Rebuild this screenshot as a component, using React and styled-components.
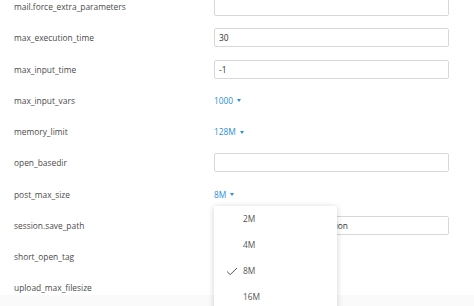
import React from 'react';
import styled, { createGlobalStyle } from 'styled-components';

const GlobalStyle = createGlobalStyle`
  html, body {
    margin: 0;
    padding: 0;
    background: #fff;
    overflow: hidden;
  }
  body {
    font-family: 'Open Sans', 'Noto Sans', sans-serif;
    color: #444;
  }
`;

const Page = styled.div`
  width: 474px;
  height: 306px;
  overflow: hidden;
  position: relative;
`;

const List = styled.div`
  margin-top: -9px;
  display: flex;
  flex-direction: column;
  position: relative;
  z-index: 1;
`;

const Row = styled.div`
  display: flex;
  align-items: center;
  height: 31.25px;
  position: relative;
`;

const Label = styled.div`
  width: 214px;
  padding-left: 14px;
  box-sizing: border-box;
  font-size: 8.4px;
  color: #4a4a4a;
  white-space: nowrap;
`;

const Input = styled.input`
  width: 235px;
  height: 19px;
  box-sizing: border-box;
  border: 1px solid #d8d8d8;
  border-radius: 2px;
  padding: 0 4px;
  font-family: inherit;
  font-size: 8.4px;
  color: #333;
  outline: none;
  background: #fff;
`;

const SelectValue = styled.div`
  position: relative;
  display: flex;
  align-items: center;
  gap: 4px;
  font-size: 8.4px;
  color: #2b8fd8;
  cursor: pointer;
`;

const Caret = styled.span`
  width: 0;
  height: 0;
  border-left: 2.5px solid transparent;
  border-right: 2.5px solid transparent;
  border-top: 3px solid #2b8fd8;
  margin-top: 1px;
`;

const Menu = styled.div`
  position: absolute;
  top: 17px;
  left: 0;
  width: 123px;
  height: 110px;
  background: #fff;
  box-shadow: 0 1px 6px rgba(0, 0, 0, 0.18);
  border-radius: 2px;
  z-index: 2;
  display: flex;
  flex-direction: column;
`;

const MenuItem = styled.div`
  position: relative;
  height: 26px;
  display: flex;
  align-items: center;
  padding-left: 29px;
  font-size: 8.4px;
  color: #555;
  flex-shrink: 0;
`;

const Check = styled.svg`
  position: absolute;
  left: 12px;
  top: 9px;
`;

const Band = styled.div`
  position: absolute;
  left: 0;
  right: 0;
  top: 295px;
  bottom: 0;
  background: #fafafa;
  z-index: 0;
`;

const rows = [
  { name: 'mail.force_extra_parameters', type: 'input', value: '' },
  { name: 'max_execution_time', type: 'input', value: '30' },
  { name: 'max_input_time', type: 'input', value: '-1' },
  { name: 'max_input_vars', type: 'select', value: '1000' },
  { name: 'memory_limit', type: 'select', value: '128M' },
  { name: 'open_basedir', type: 'input', value: '' },
  { name: 'post_max_size', type: 'select', value: '8M', open: true },
  { name: 'session.save_path', type: 'input', value: '/var/www/vhosts/system/session' },
  { name: 'short_open_tag', type: 'none' },
  { name: 'upload_max_filesize', type: 'none' },
];

const sizes = ['2M', '4M', '8M', '16M'];

function DropdownMenu({ selected }) {
  return (
    <Menu>
      {sizes.map((s) => (
        <MenuItem key={s}>
          {s === selected && (
            <Check width="12" height="9" viewBox="0 0 12 9">
              <path d="M1 4.5 L4.2 7.6 L11 1" fill="none" stroke="#555" strokeWidth="1" />
            </Check>
          )}
          {s}
        </MenuItem>
      ))}
    </Menu>
  );
}

export default function App() {
  return (
    <Page>
      <GlobalStyle />
      <Band />
      <List>
        {rows.map((r) => (
          <Row key={r.name}>
            <Label>{r.name}</Label>
            {r.type === 'input' && <Input defaultValue={r.value} readOnly />}
            {r.type === 'select' && (
              <SelectValue>
                {r.value}
                <Caret />
                {r.open && <DropdownMenu selected={r.value} />}
              </SelectValue>
            )}
          </Row>
        ))}
      </List>
    </Page>
  );
}
